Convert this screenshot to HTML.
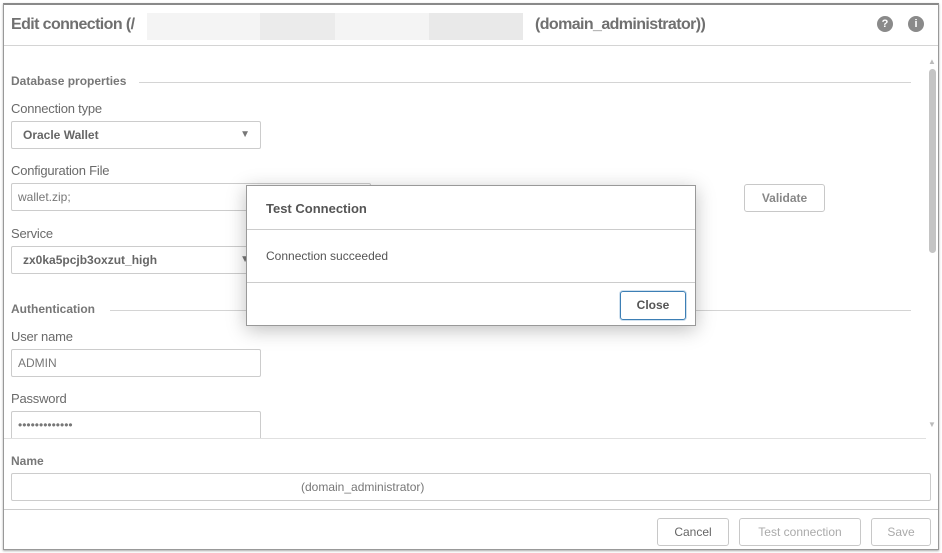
<!DOCTYPE html>
<html><head><style>
*{box-sizing:border-box;margin:0;padding:0}
body{width:942px;height:553px;background:#fff;font-family:"Liberation Sans",sans-serif;color:#595959;position:relative;overflow:hidden}
.a{position:absolute}
.frame{left:3px;top:3px;width:936px;height:547px;border:1px solid #999;border-top:2px solid #8a8a8a;box-shadow:0 1px 2px #aaa}
.lbl{font-size:13px;color:#6a6a6a;letter-spacing:-0.2px}
.inp{border:1px solid #ccc;border-radius:2px;height:28px;font-size:12px;padding:0 6px;line-height:26px;color:#777}
.sec{font-size:12px;font-weight:bold;color:#777}
.line{height:1px;background:#d4d4d4}
.btn{border:1px solid #c8c8c8;border-radius:3px;font-size:12px;color:#888;text-align:center;line-height:26px;height:28px;background:#fff}
</style></head><body>
<div class="a frame"></div>
<div class="a" style="left:11px;top:16px;font-size:16px;font-weight:bold;color:#707070;letter-spacing:-0.6px">Edit connection (/</div>
<div class="a" style="left:147px;top:13px;width:376px;height:27px;background:linear-gradient(90deg,#f4f4f4 0 30%,#ebebeb 30% 50%,#f4f4f4 50% 75%,#e9e9e9 75%)"></div>
<div class="a" style="left:535px;top:16px;font-size:16px;font-weight:bold;color:#707070;letter-spacing:-0.6px">(domain_administrator))</div>
<div class="a" style="left:877px;top:16px;width:16px;height:16px;border-radius:50%;background:#8a8a8a;color:#fff;font-size:11px;font-weight:bold;text-align:center;line-height:16px">?</div>
<div class="a" style="left:908px;top:16px;width:16px;height:16px;border-radius:50%;background:#8a8a8a;color:#fff;font-size:11px;font-weight:bold;text-align:center;line-height:16px">i</div>
<div class="a line" style="left:4px;top:45px;width:934px"></div>
<div class="a" style="left:928px;top:57px;font-size:8px;color:#bbb">▲</div>
<div class="a" style="left:929px;top:69px;width:7px;height:184px;border-radius:4px;background:#c4c4c4"></div>
<div class="a" style="left:928px;top:420px;font-size:8px;color:#bbb">▼</div>

<div class="a sec" style="left:11px;top:74px">Database properties</div>
<div class="a line" style="left:139px;top:82px;width:772px"></div>
<div class="a lbl" style="left:11px;top:101px">Connection type</div>
<div class="a inp" style="left:11px;top:121px;width:250px;font-weight:bold;color:#666;padding-left:11px">Oracle Wallet<span style="position:absolute;right:10px;font-size:10px;color:#777">▼</span></div>
<div class="a lbl" style="left:11px;top:163px">Configuration File</div>
<div class="a inp" style="left:11px;top:183px;width:360px">wallet.zip;</div>
<div class="a btn" style="left:744px;top:184px;width:81px;font-weight:bold">Validate</div>
<div class="a lbl" style="left:11px;top:226px">Service</div>
<div class="a inp" style="left:11px;top:246px;width:250px;font-weight:bold;color:#666;padding-left:11px">zx0ka5pcjb3oxzut_high<span style="position:absolute;right:10px;font-size:10px;color:#777">▼</span></div>
<div class="a sec" style="left:11px;top:302px">Authentication</div>
<div class="a line" style="left:110px;top:310px;width:801px"></div>
<div class="a lbl" style="left:11px;top:329px">User name</div>
<div class="a inp" style="left:11px;top:349px;width:250px">ADMIN</div>
<div class="a lbl" style="left:11px;top:391px">Password</div>
<div class="a inp" style="left:11px;top:411px;width:250px;height:30px">•••••••••••••</div>
<div class="a" style="left:4px;top:438px;width:922px;height:110px;background:#fff;border-top:1px solid #e0e0e0"></div>
<div class="a sec" style="left:11px;top:454px;font-size:12px">Name</div>
<div class="a inp" style="left:11px;top:473px;width:920px;height:28px;padding-left:289px">(domain_administrator)</div>
<div class="a line" style="left:4px;top:509px;width:934px;background:#ccc"></div>
<div class="a btn" style="left:657px;top:518px;width:72px;color:#666">Cancel</div>
<div class="a btn" style="left:739px;top:518px;width:122px;color:#aaa">Test connection</div>
<div class="a btn" style="left:871px;top:518px;width:60px;color:#aaa">Save</div>

<div class="a" style="left:246px;top:185px;width:450px;height:141px;background:#fff;border:1px solid #999;box-shadow:0 4px 18px rgba(0,0,0,.25)">
 <div class="a" style="left:19px;top:15px;font-size:13px;font-weight:bold;color:#555">Test Connection</div>
 <div class="a line" style="left:0;top:43px;width:448px;background:#ccc"></div>
 <div class="a" style="left:19px;top:63px;font-size:12px;color:#555">Connection succeeded</div>
 <div class="a line" style="left:0;top:96px;width:448px;background:#ccc"></div>
 <div class="a" style="left:373px;top:105px;width:66px;height:29px;border:1px solid #3d7fb5;border-radius:3px;font-size:12px;font-weight:bold;color:#555;text-align:center;line-height:27px;box-shadow:0 0 0 1px #cfe0ee">Close</div>
</div>
</body></html>
